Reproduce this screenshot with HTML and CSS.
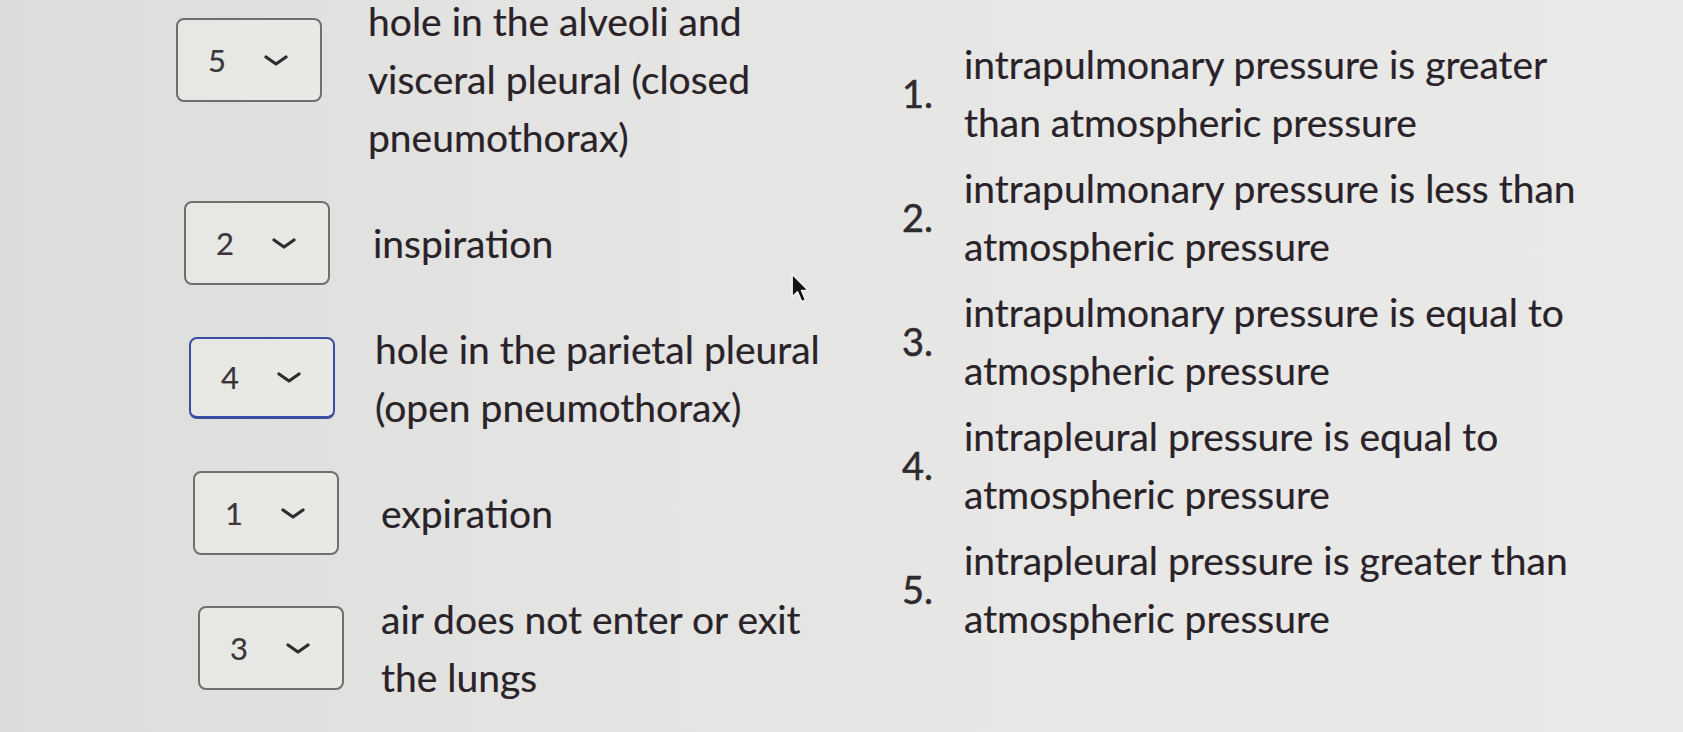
FILE: index.html
```html
<!DOCTYPE html>
<html lang="en">
<head>
<meta charset="utf-8">
<title>Matching: pressure changes</title>
<link rel="stylesheet" href="styles.css">
</head>
<body>
<main class="sheet">
  <section class="pairs">
    <div class="pair pair--top">
      <div class="pick"><span class="pick__value">5</span><svg class="pick__chev" viewBox="0 0 24 11"><path d="M2 2 L12 9 L22 2"/></svg></div>
      <p class="pair__text">hole in the alveoli and<br>visceral pleural (closed<br>pneumothorax)</p>
    </div>
    <div class="pair pair--2">
      <div class="pick"><span class="pick__value">2</span><svg class="pick__chev" viewBox="0 0 24 11"><path d="M2 2 L12 9 L22 2"/></svg></div>
      <p class="pair__text">inspiration</p>
    </div>
    <div class="pair pair--3">
      <div class="pick pick--focus"><span class="pick__value">4</span><svg class="pick__chev" viewBox="0 0 24 11"><path d="M2 2 L12 9 L22 2"/></svg></div>
      <p class="pair__text">hole in the parietal pleural<br>(open pneumothorax)</p>
    </div>
    <div class="pair pair--4">
      <div class="pick"><span class="pick__value">1</span><svg class="pick__chev" viewBox="0 0 24 11"><path d="M2 2 L12 9 L22 2"/></svg></div>
      <p class="pair__text">expiration</p>
    </div>
    <div class="pair pair--5">
      <div class="pick"><span class="pick__value">3</span><svg class="pick__chev" viewBox="0 0 24 11"><path d="M2 2 L12 9 L22 2"/></svg></div>
      <p class="pair__text">air does not enter or exit<br>the lungs</p>
    </div>
  </section>

  <ol class="choices">
    <li class="choice"><span class="choice__num">1.</span><span class="choice__text">intrapulmonary pressure is greater<br>than atmospheric pressure</span></li>
    <li class="choice"><span class="choice__num">2.</span><span class="choice__text">intrapulmonary pressure is less than<br>atmospheric pressure</span></li>
    <li class="choice"><span class="choice__num">3.</span><span class="choice__text">intrapulmonary pressure is equal to<br>atmospheric pressure</span></li>
    <li class="choice"><span class="choice__num">4.</span><span class="choice__text">intrapleural pressure is equal to<br>atmospheric pressure</span></li>
    <li class="choice"><span class="choice__num">5.</span><span class="choice__text">intrapleural pressure is greater than<br>atmospheric pressure</span></li>
  </ol>

  <svg class="pointer" viewBox="0 0 16 26" aria-hidden="true"><path d="M1 1 L1 20 L5.5 15.8 L9 24 L12.2 22.6 L8.8 14.6 L14.6 14.6 Z"/></svg>
</main>
</body>
</html>
```

FILE: styles.css
```css
html, body {
  margin: 0;
  height: 100%;
}

body {
  background: linear-gradient(90deg, #dcdcda 0%, #e2e2e0 25%, #e7e7e5 60%, #e9e9e7 100%);
  color: #2a2229;
  font-family: Lato, "Open Sans", sans-serif;
  overflow: hidden;
}

.sheet {
  position: relative;
  display: flex;
  align-items: flex-start;
  height: 100%;
}

/* left column: dropdown + statement */
.pairs {
  display: flex;
  flex-direction: column;
  gap: 35px;
  width: 726px;
  margin-top: -8px;
  padding-left: 176px;
  flex: none;
}

.pair {
  display: grid;
  grid-template-columns: 146px 1fr;
  column-gap: 46px;
  align-items: center;
}

.pair--top { align-items: start; }
.pair--top .pick { margin-top: 26px; }
.pair--2 { padding-left: 8px; }
.pair--3 { padding-left: 13px; }
.pair--4 { padding-left: 17px; }
.pair--5 { padding-left: 22px; }
.pair--2 .pair__text { margin-left: -3px; }
.pair--3 .pair__text { margin-left: -6px; }
.pair--4 .pair__text { margin-left: -4px; }
.pair--5 .pair__text { margin-left: -9px; }

.pair__text {
  margin: 0;
  font-size: 39px;
  line-height: 58px;
  white-space: nowrap;
  -webkit-text-stroke: 0.2px currentColor;
}

.pick {
  box-sizing: border-box;
  height: 84px;
  display: flex;
  align-items: center;
  justify-content: space-between;
  padding: 0 32px 0 30px;
  border: 2px solid #6f6f6f;
  border-radius: 8px;
  background: rgba(236, 236, 234, 0.6);
}

.pick--focus {
  height: 82px;
  border-color: #3b4ca4;
  border-bottom-width: 3px;
}

.pick__value {
  font-size: 31px;
  line-height: 1;
  color: #3a363a;
  -webkit-text-stroke: 0.2px currentColor;
}

.pick__chev {
  width: 24px;
  height: 11px;
  fill: none;
  stroke: #2f2b2f;
  stroke-width: 3.2;
  stroke-linecap: round;
  stroke-linejoin: round;
}

/* right column: numbered answer list */
.choices {
  list-style: none;
  margin: 35px 0 0;
  padding: 0;
  display: flex;
  flex-direction: column;
  gap: 8px;
}

.choice {
  display: flex;
  align-items: center;
}

.choice__num {
  width: 62px;
  flex: none;
  font-size: 38px;
  line-height: 58px;
  color: #2f2a2e;
  -webkit-text-stroke: 0.5px currentColor;
}

.choice__text {
  font-size: 39px;
  line-height: 58px;
  white-space: nowrap;
  -webkit-text-stroke: 0.2px currentColor;
}

/* mouse pointer over the page */
.pointer {
  position: absolute;
  left: 791px;
  top: 273px;
  width: 19px;
  height: 31px;
}

.pointer path {
  fill: #111;
  stroke: #f4f4f4;
  stroke-width: 1.2;
  stroke-linejoin: round;
}
```
